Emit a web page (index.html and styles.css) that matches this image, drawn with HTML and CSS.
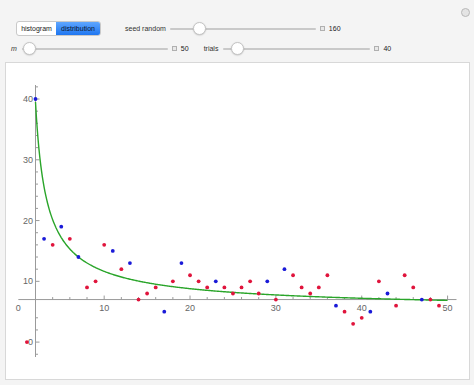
FILE: index.html
```html
<!DOCTYPE html>
<html lang="en">
<head>
    <meta charset="UTF-8">
    <title>Distribution</title>
    <link rel="stylesheet" href="styles.css">
</head>
<body>
    <div class="corner-btn"></div>

    <div class="controls">
        <div class="row row-one">
            <div class="toggle">
                <span class="seg seg-left">histogram</span>
                <span class="seg seg-right active">distribution</span>
            </div>
            <span class="label seed-label">seed random</span>
            <div class="slider"><span class="thumb" style="left: 19.7%;"></span></div>
            <span class="plus"></span>
            <span class="value">160</span>
        </div>
        <div class="row row-two">
            <span class="label m-label">m</span>
            <div class="slider"><span class="thumb" style="left: 4.8%;"></span></div>
            <span class="plus"></span>
            <span class="value">50</span>
            <span class="label trials-label">trials</span>
            <div class="slider trials-slider"><span class="thumb" style="left: 9%;"></span></div>
            <span class="plus"></span>
            <span class="value">40</span>
        </div>
    </div>

    <div class="plot">
        <svg id="chart" width="463" height="316" viewBox="6 63 463 316"></svg>
    </div>

    <script>
        const NS = 'http://www.w3.org/2000/svg';
        const chart = document.getElementById('chart');

        const px = x => 18.33 + 8.585 * x;
        const py = y => 342.1 - 6.077 * y;

        const counts = [0, 40, 17, 16, 19, 17, 14, 9, 10, 16, 15, 12, 13, 7, 8, 9, 5, 10, 13, 11,
            10, 9, 10, 9, 8, 9, 10, 8, 10, 7, 12, 11, 9, 8, 9, 11, 6, 5, 3, 4,
            5, 10, 8, 6, 11, 9, 7, 7, 6];

        function isPrime(n) {
            if (n < 2) return false;
            for (let i = 2; i * i <= n; i++) {
                if (n % i === 0) return false;
            }
            return true;
        }

        function add(tag, attrs, text) {
            const el = document.createElementNS(NS, tag);
            for (const k in attrs) el.setAttribute(k, attrs[k]);
            if (text !== undefined) el.textContent = text;
            chart.appendChild(el);
            return el;
        }

        // axes
        const ax = px(2), ay = py(7);
        add('line', { x1: px(0), y1: ay, x2: 456.5, y2: ay, class: 'axis' });
        add('line', { x1: ax, y1: 85, x2: ax, y2: 357, class: 'axis' });

        for (let v = 4; v <= 50; v += 2) {
            const len = v % 10 === 0 ? 4 : 2.5;
            add('line', { x1: px(v), y1: ay, x2: px(v), y2: ay - len, class: 'axis' });
        }
        for (let v = -2; v <= 42; v += 2) {
            if (v === 6 || v === 8) continue;
            const len = v % 10 === 0 ? 4 : 2.5;
            add('line', { x1: ax, y1: py(v), x2: ax + len, y2: py(v), class: 'axis' });
        }

        for (let v = 0; v <= 50; v += 10) {
            add('text', { x: px(v), y: ay + 11.5, class: 'tick-label', 'text-anchor': 'middle' }, v);
        }
        for (let v = 0; v <= 40; v += 10) {
            add('text', { x: ax - 2.5, y: py(v) + 3, class: 'tick-label', 'text-anchor': 'end' }, v);
        }

        // theory curve
        let d = '';
        for (let x = 2; x <= 50.001; x += 0.1) {
            const y = 34.5 / Math.pow(x - 1, 0.75) + 5;
            d += (d ? ' L ' : 'M ') + px(x).toFixed(2) + ' ' + py(y).toFixed(2);
        }
        add('path', { d: d, class: 'curve' });

        // sample points
        counts.forEach((c, i) => {
            const n = i + 1;
            add('circle', { cx: px(n), cy: py(c), r: 1.9, class: isPrime(n) ? 'dot prime' : 'dot' });
        });
    </script>
</body>
</html>
```

FILE: styles.css
```css
body {
    margin: 0;
    width: 474px;
    height: 385px;
    background-color: #f4f4f4;
    font-family: "Liberation Sans", Arial, sans-serif;
    font-size: 7px;
    color: #333333;
    position: relative;
    overflow: hidden;
}

.corner-btn {
    position: absolute;
    left: 461px;
    top: 8px;
    width: 7px;
    height: 7px;
    border: 1px solid #b8b8b8;
    border-radius: 50%;
    background-color: #e4e4e4;
}

.controls {
    padding-top: 18px;
}

.row {
    display: flex;
    align-items: center;
    height: 20px;
}

.row-one {
    padding-left: 16px;
}

.row-two {
    padding-left: 11px;
}

.toggle {
    display: flex;
    height: 15px;
    border: 1px solid #c9c9c9;
    border-radius: 3px;
    box-sizing: border-box;
    overflow: hidden;
    background-color: #ffffff;
}

.seg {
    display: flex;
    align-items: center;
    justify-content: center;
    font-size: 7px;
    color: #222222;
}

.seg-left {
    width: 39px;
}

.seg-right {
    width: 44px;
}

.seg.active {
    background: linear-gradient(#5ea6ff, #1f76f0);
    color: #0b1630;
}

.label {
    font-size: 7px;
    color: #333333;
}

.seed-label {
    margin-left: 24px;
    margin-right: 4px;
}

.m-label {
    font-style: italic;
    margin-right: 5px;
}

.trials-label {
    margin-left: 15px;
    margin-right: 5px;
}

.slider {
    position: relative;
    width: 146px;
    height: 13px;
}

.slider::before {
    content: "";
    position: absolute;
    left: 0;
    right: 0;
    top: 6px;
    height: 2px;
    background-color: #c9c9c9;
    border-radius: 1px;
}

.trials-slider {
    width: 147px;
}

.thumb {
    position: absolute;
    top: 0;
    width: 13px;
    height: 13px;
    margin-left: -6px;
    box-sizing: border-box;
    border: 1px solid #c4c4c4;
    border-radius: 50%;
    background-color: #ffffff;
    box-shadow: 0 0.5px 1.5px rgba(0, 0, 0, 0.2);
}

.plus {
    width: 5px;
    height: 5px;
    box-sizing: border-box;
    margin: 0 4px 0 4px;
    border: 1px solid #b0b0b0;
    background-color: #e8e8e8;
}

.value {
    font-size: 7px;
    color: #222222;
}

.plot {
    margin: 4px 4px 0 5px;
    height: 318px;
    box-sizing: border-box;
    border: 1px solid #d8d8d8;
    background-color: #ffffff;
}

.plot svg {
    display: block;
}

.axis {
    stroke: #9a9a9a;
    stroke-width: 1;
}

.tick-label {
    font-family: "Liberation Sans", Arial, sans-serif;
    font-size: 9px;
    fill: #666666;
}

.curve {
    fill: none;
    stroke: #2aa52a;
    stroke-width: 1.4;
}

.dot {
    fill: #e0143c;
}

.dot.prime {
    fill: #1a1ad8;
}
```
